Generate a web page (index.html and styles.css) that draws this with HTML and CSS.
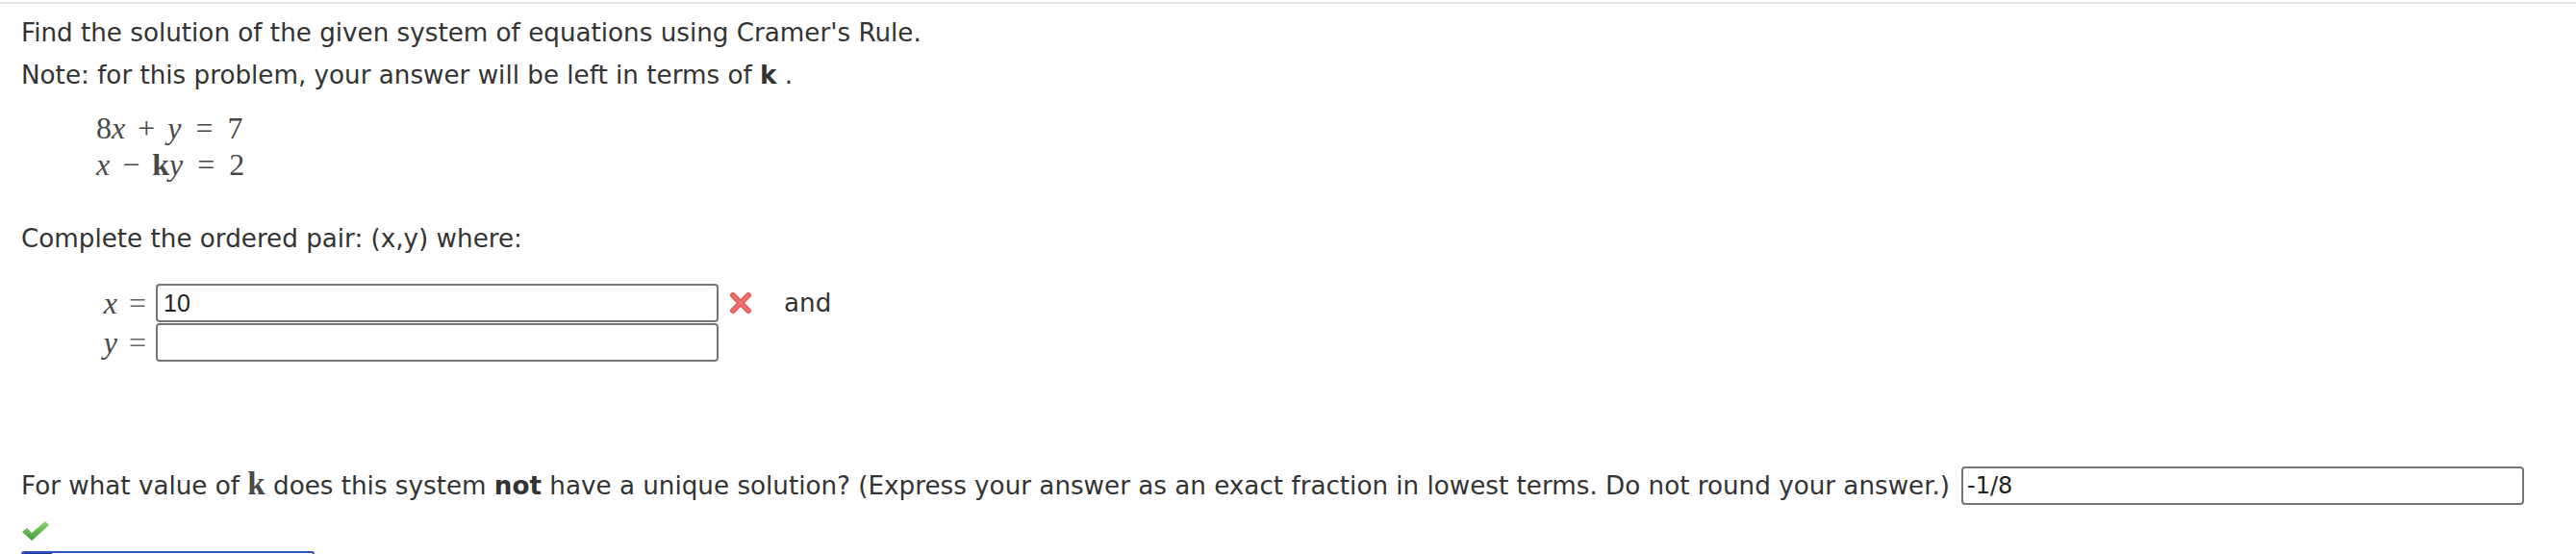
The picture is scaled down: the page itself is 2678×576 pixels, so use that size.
FILE: index.html
```html
<!doctype html>
<html>
<head>
<title>Cramer's Rule</title>
<link rel="stylesheet" href="styles.css">
</head>
<body>
<div class="rule"></div>
<main class="question">
	<p class="intro">Find the solution of the given system of equations using Cramer's Rule.<br>Note: for this problem, your answer will be left in terms of <b>k</b> .</p>

	<div class="system">
		<div class="eq">8<i>x</i><span class="op">+</span><i>y</i><span class="rel">=</span>7</div>
		<div class="eq"><i>x</i><span class="op">&minus;</span><b>k</b><i>y</i><span class="rel">=</span>2</div>
	</div>

	<p class="prompt">Complete the ordered pair: (x,y) where:</p>

	<div class="pair">
		<div class="pair-row">
			<span class="var"><i>x</i><span class="rel">=</span></span>
			<input class="answer" type="text" value="10">
			<svg class="mark-wrong" width="26" height="26" viewBox="0 0 26 26">
				<path d="M5 5 L21 21 M21 5 L5 21" stroke="#e35d5d" stroke-width="6" stroke-linecap="round"/>
				<path d="M5 5 L21 21 M21 5 L5 21" stroke="#f08a8a" stroke-width="2" stroke-linecap="round" opacity=".6"/>
			</svg>
			<span class="and">and</span>
		</div>
		<div class="pair-row">
			<span class="var"><i>y</i><span class="rel">=</span></span>
			<input class="answer" type="text" value="">
		</div>
	</div>

	<div class="unique">
		<span>For what value of <b class="mk">k</b> does this system <b>not</b> have a unique solution? (Express your answer as an exact fraction in lowest terms. Do not round your answer.)</span>
		<input class="answer frac" type="text" value="-1/8">
	</div>

	<svg class="mark-right" width="30" height="22" viewBox="0 0 30 22">
		<defs>
			<linearGradient id="ok" x1="0" y1="0" x2="0" y2="1">
				<stop offset="0" stop-color="#8fd26f"/>
				<stop offset="1" stop-color="#3f9b34"/>
			</linearGradient>
		</defs>
		<path d="M1 12 L6 8 L11 13 L25 1 L29 5 L11 21 Z" fill="url(#ok)"/>
	</svg>

	<div class="help"><span class="help-icon"></span></div>
</main>
</body>
</html>
```

FILE: styles.css
```css
* {
	box-sizing: border-box;
	margin: 0;
	padding: 0;
}

body {
	background: #fff;
	color: #333;
	font-family: "DejaVu Sans", Verdana, sans-serif;
	font-size: 26.2px;
}

.rule {
	background: #e3e3e3;
	height: 2px;
	margin-top: 2px;
}

.question {
	padding: 0 22px;
}

.intro {
	line-height: 44px;
	margin-top: 8px;
}

/* math, set like MathJax output */
.system, .var, .mk {
	color: #484848;
	font-family: "Liberation Serif", "Times New Roman", serif;
}

.system {
	font-size: 32px;
	line-height: 38px;
	margin: 14px 0 0 78px;
}

.op {
	margin: 0 13px;
}

.rel {
	margin: 0 15px;
}

.prompt {
	line-height: 44px;
	margin-top: 36px;
}

.pair {
	margin-top: 25px;
}

.pair-row {
	align-items: center;
	display: flex;
	height: 40px;
}

.pair-row + .pair-row {
	margin-top: 1px;
}

.var {
	display: flex;
	font-size: 32px;
	justify-content: flex-end;
	margin-left: 78px;
	width: 62px;
}

.var .rel {
	color: #666;
	margin: 0 10px 0 12px;
}

.answer {
	background: #fff;
	border: 2px solid #757575;
	border-radius: 4px;
	color: #222;
	font-family: "Liberation Sans", Arial, sans-serif;
	font-size: 25px;
	height: 40px;
	outline: none;
	padding: 0 6px;
	width: 585px;
}

.mark-wrong {
	margin-left: 10px;
}

.and {
	margin-left: 32px;
}

.unique {
	align-items: center;
	display: flex;
	line-height: 44px;
	margin-top: 107px;
	white-space: nowrap;
}

.mk {
	font-size: 33px;
	line-height: 1;
}

.frac {
	font-family: "DejaVu Sans", Verdana, sans-serif;
	font-size: 24px;
	margin-left: 12px;
	padding: 0 4px;
}

.mark-right {
	display: block;
	margin-top: 14px;
}

/* only the top edge of this button is on screen */
.help {
	border: 2px solid #2f4fc4;
	border-bottom: none;
	border-radius: 8px 8px 0 0;
	height: 3px;
	margin-top: 10px;
	overflow: hidden;
	width: 305px;
}

.help-icon {
	background: #1e3799;
	display: block;
	height: 100%;
	width: 30px;
}
```
